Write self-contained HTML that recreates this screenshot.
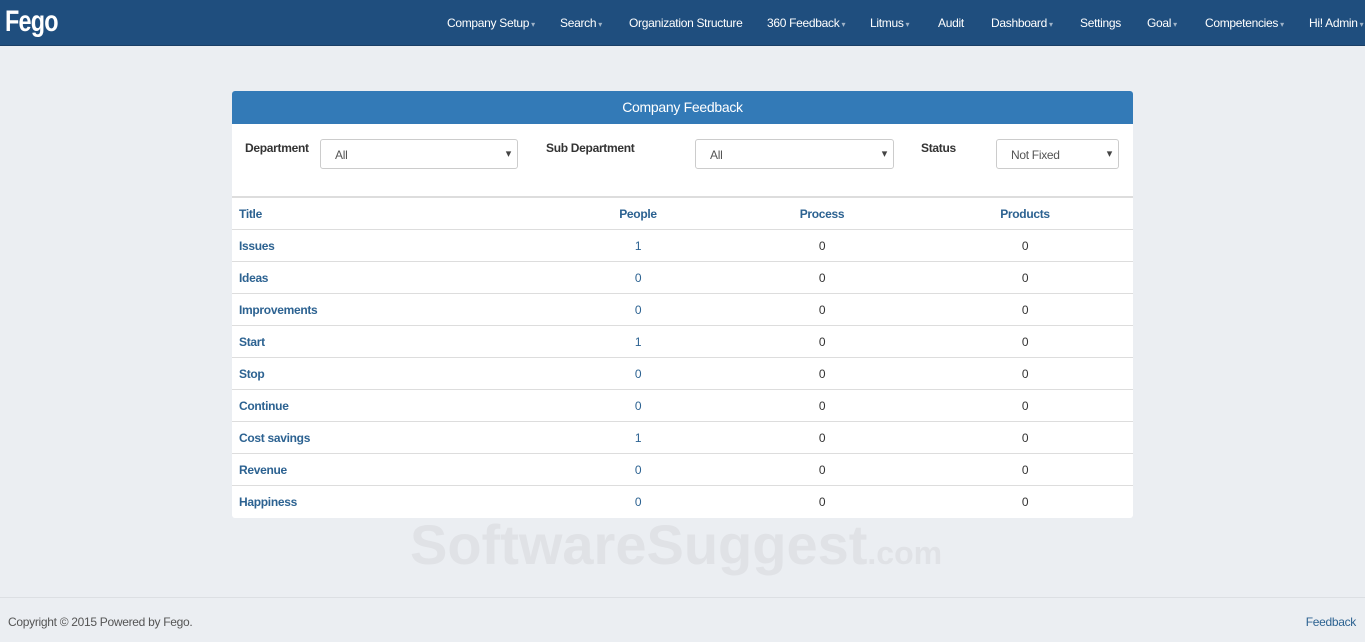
<!DOCTYPE html>
<html><head><style>
*{margin:0;padding:0;box-sizing:border-box}
body{width:1365px;height:642px;background:#ebeef2;font-family:"Liberation Sans",sans-serif;font-size:12px;position:relative;overflow:hidden;letter-spacing:-0.3px}
.nav{position:absolute;left:0;top:0;width:1365px;height:46px;background:#1f4e7e;border-bottom:1px solid #1a3f66}
.logo{position:absolute;left:5px;top:5px;color:#fff;font-size:30px;font-weight:bold;letter-spacing:-1px;transform:scaleX(.78);transform-origin:left}
.nav span{position:absolute;top:16px;color:#fff;font-size:12px;white-space:nowrap}
.nav span i{font-style:normal;color:#9fb3c8;font-size:8px;margin-left:2px}
.panel{position:absolute;left:232px;top:91px;width:901px;height:427px;background:#fff;border-radius:3px}
.ph{height:33px;background:#337ab7;color:#fff;font-size:14px;text-align:center;line-height:33px;border-radius:3px 3px 0 0}
.lbl{position:absolute;top:50px;font-weight:bold;color:#333;font-size:12px}
.sel{position:absolute;top:48px;height:30px;border:1px solid #ccc;border-radius:3px;color:#555;padding:8px 14px;font-size:12px}
.sel:after{content:"▾";position:absolute;right:6px;top:7px;font-size:11px;color:#444}
.hr{position:absolute;left:0;top:105px;width:901px;border-top:2px solid #ddd}
.row{position:absolute;left:0;width:901px;height:32px;border-bottom:1px solid #ddd;line-height:32px;color:#2c6291;font-weight:bold}
.row b{position:absolute;left:7px}
.row s{position:absolute;text-decoration:none;font-weight:normal;transform:translateX(-50%)}
.row.h s{font-weight:bold}
.wm{position:absolute;left:410px;top:512px;font-size:56px;font-weight:bold;color:#e0e2e6;letter-spacing:0}
.wm small{font-size:32px}
.ft{position:absolute;left:0;top:597px;width:1365px;height:45px;border-top:1px solid #dcdfe3;color:#555}
</style></head><body>
<div class="nav"><div class="logo">Fego</div>
<span style="left:447px">Company Setup<i>▾</i></span>
<span style="left:560px">Search<i>▾</i></span>
<span style="left:629px">Organization Structure</span>
<span style="left:767px">360 Feedback<i>▾</i></span>
<span style="left:870px">Litmus<i>▾</i></span>
<span style="left:938px">Audit</span>
<span style="left:991px">Dashboard<i>▾</i></span>
<span style="left:1080px">Settings</span>
<span style="left:1147px">Goal<i>▾</i></span>
<span style="left:1205px">Competencies<i>▾</i></span>
<span style="left:1309px">Hi! Admin<i>▾</i></span>
</div>
<div class="wm">SoftwareSuggest<small>.com</small></div>
<div class="panel"><div class="ph">Company Feedback</div>
<div class="lbl" style="left:13px">Department</div>
<div class="sel" style="left:88px;width:198px">All</div>
<div class="lbl" style="left:314px">Sub Department</div>
<div class="sel" style="left:463px;width:199px">All</div>
<div class="lbl" style="left:689px">Status</div>
<div class="sel" style="left:764px;width:123px">Not Fixed</div>
<div class="hr"></div>
<div class="row h" style="top:107px"><b>Title</b><s style="left:406px">People</s><s style="left:590px">Process</s><s style="left:793px">Products</s></div>
<div class="row" style="top:139px"><b>Issues</b><s style="left:406px">1</s><s style="left:590px;color:#333">0</s><s style="left:793px;color:#333">0</s></div>
<div class="row" style="top:171px"><b>Ideas</b><s style="left:406px">0</s><s style="left:590px;color:#333">0</s><s style="left:793px;color:#333">0</s></div>
<div class="row" style="top:203px"><b>Improvements</b><s style="left:406px">0</s><s style="left:590px;color:#333">0</s><s style="left:793px;color:#333">0</s></div>
<div class="row" style="top:235px"><b>Start</b><s style="left:406px">1</s><s style="left:590px;color:#333">0</s><s style="left:793px;color:#333">0</s></div>
<div class="row" style="top:267px"><b>Stop</b><s style="left:406px">0</s><s style="left:590px;color:#333">0</s><s style="left:793px;color:#333">0</s></div>
<div class="row" style="top:299px"><b>Continue</b><s style="left:406px">0</s><s style="left:590px;color:#333">0</s><s style="left:793px;color:#333">0</s></div>
<div class="row" style="top:331px"><b>Cost savings</b><s style="left:406px">1</s><s style="left:590px;color:#333">0</s><s style="left:793px;color:#333">0</s></div>
<div class="row" style="top:363px"><b>Revenue</b><s style="left:406px">0</s><s style="left:590px;color:#333">0</s><s style="left:793px;color:#333">0</s></div>
<div class="row" style="top:395px;border-bottom:none"><b>Happiness</b><s style="left:406px">0</s><s style="left:590px;color:#333">0</s><s style="left:793px;color:#333">0</s></div>
</div>
<div class="ft"><span style="position:absolute;left:8px;top:17px">Copyright © 2015 Powered by Fego.</span><span style="position:absolute;right:9px;top:17px;color:#2c6291">Feedback</span></div>
</body></html>
